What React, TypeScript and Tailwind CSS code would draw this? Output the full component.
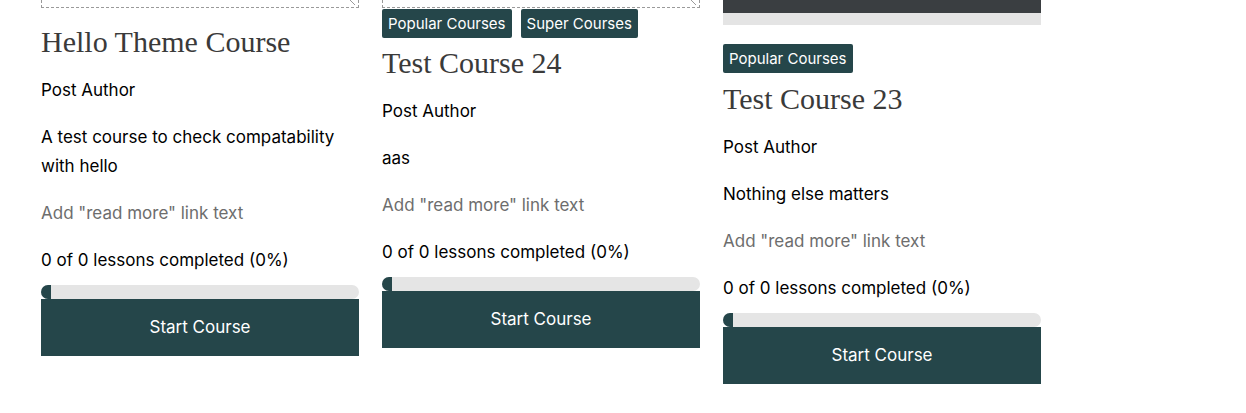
import React from 'react';

const TEAL = 'bg-[#25464a]';

interface Course {
  title: string;
  text: string[];
  tags: string[];
  media: 'dashed' | 'image';
}

const COURSES: Course[] = [
  { title: 'Hello Theme Course', text: ['A test course to check compatability', 'with hello'], tags: [], media: 'dashed' },
  { title: 'Test Course 24', text: ['aas'], tags: ['Popular Courses', 'Super Courses'], media: 'dashed' },
  { title: 'Test Course 23', text: ['Nothing else matters'], tags: ['Popular Courses'], media: 'image' },
];

function DashedBox() {
  return (
    <div className="relative h-[8px] border-x border-b border-dashed border-[#9a9a9a]">
      <svg className="absolute right-[3px] bottom-[2px]" width="5" height="5" viewBox="0 0 5 5">
        <path d="M0 0 L5 5" stroke="#9a9a9a" strokeWidth="1" />
      </svg>
    </div>
  );
}

function Tag({ label }: { label: string }) {
  return (
    <span className={`${TEAL} text-white text-[15px] leading-[29px] h-[29px] px-[6px] rounded-[2px]`}>
      {label}
    </span>
  );
}

function CourseCard({ course }: { course: Course }) {
  const hasTags = course.tags.length > 0;
  const titleMt = course.media === 'image' ? 'mt-[9px]' : hasTags ? 'mt-[8px]' : 'mt-[17px]';

  return (
    <div className="w-[318px] flex flex-col">
      {course.media === 'dashed' ? (
        <DashedBox />
      ) : (
        <div>
          <div className="h-[13px] bg-[#3a3e41]" />
          <div className="h-[12px] bg-[#e4e4e4]" />
        </div>
      )}

      {hasTags && (
        <div className={`flex gap-[9px] ${course.media === 'image' ? 'mt-[19px]' : 'mt-[1px]'}`}>
          {course.tags.map((t) => (
            <Tag key={t} label={t} />
          ))}
        </div>
      )}

      <h2 className={`${titleMt} text-[30px] leading-[34px] text-[#3a3a3a] font-['Liberation_Serif',serif]`}>
        {course.title}
      </h2>

      <p className="mt-[17px]">Post Author</p>
      <p className="mt-[18px]">
        {course.text.map((line, i) => (
          <span key={i} className="block">
            {line}
          </span>
        ))}
      </p>
      <p className="mt-[18px] text-[#6d6d6d]">Add "read more" link text</p>
      <p className="mt-[18px]">0 of 0 lessons completed (0%)</p>

      <div className="mt-[10px] h-[14px] rounded-full bg-[#e5e5e5] overflow-hidden">
        <div className={`h-full w-[10px] ${TEAL}`} />
      </div>
      <button className={`${TEAL} h-[57px] w-full text-white text-[17px]`}>Start Course</button>
    </div>
  );
}

export default function App() {
  return (
    <div className="min-h-[413px] bg-white text-[#000] text-[17px] leading-[29px] font-['Inter','Noto_Sans',sans-serif]">
      <div className="flex items-start gap-[23px] pl-[41px]">
        {COURSES.map((c) => (
          <CourseCard key={c.title} course={c} />
        ))}
      </div>
    </div>
  );
}
